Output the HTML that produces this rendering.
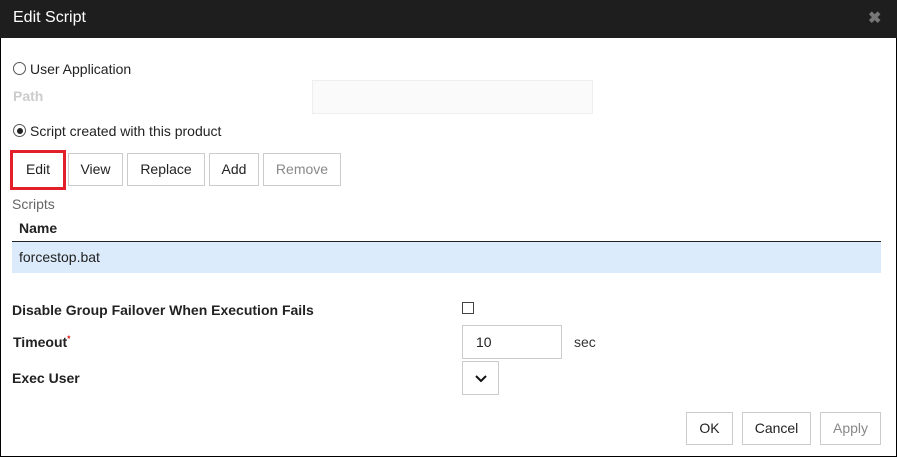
<!DOCTYPE html>
<html><head><style>
body{margin:0;width:897px;height:457px;overflow:hidden;background:#fff;font-family:"Liberation Sans",Arial,sans-serif;font-size:14px;color:#222}
.f{position:absolute;left:0;top:0;width:895px;height:455px;border:1px solid #000;}
.h{position:absolute;left:0;top:0;width:897px;height:38px;background:#1e1e1e;color:#fff;font-size:16px}
.a{position:absolute}
.b{position:absolute;border:1px solid #ccc;background:#fff;height:31px;line-height:31px;text-align:center;font-size:14px;color:#222;box-sizing:border-box;height:33px}
.bold{font-weight:bold}
.rad{position:absolute;width:11px;height:11px;border:1px solid #555;border-radius:50%;background:#fff}
</style></head><body>
<div class="f"></div>
<div class="h"><span class="a" style="left:13px;top:9px">Edit Script</span><span class="a" style="left:868px;top:8px;color:#777;font-size:16px;font-weight:bold">✖</span></div>
<div class="rad" style="left:13px;top:62px"></div>
<span class="a" style="left:30px;top:61px">User Application</span>
<span class="a bold" style="left:13px;top:88px;color:#ccc">Path</span>
<div class="a" style="left:312px;top:80px;width:279px;height:32px;border:1px solid #eee;background:#fafafa"></div>
<div class="rad" style="left:13px;top:124px"><div style="position:absolute;left:2.5px;top:2.5px;width:6px;height:6px;border-radius:50%;background:#222"></div></div>
<span class="a" style="left:30px;top:123px">Script created with this product</span>
<div class="a" style="left:10px;top:150px;width:50px;height:34px;border:3px solid #e3202a"></div>
<div class="b" style="left:15px;top:153px;width:46px;border-color:transparent">Edit</div>
<div class="b" style="left:68px;top:153px;width:55px">View</div>
<div class="b" style="left:127px;top:153px;width:78px">Replace</div>
<div class="b" style="left:209px;top:153px;width:50px">Add</div>
<div class="b" style="left:263px;top:153px;width:78px;color:#888">Remove</div>
<span class="a" style="left:12px;top:196px;color:#666">Scripts</span>
<span class="a bold" style="left:19px;top:220px">Name</span>
<div class="a" style="left:12px;top:241px;width:869px;height:1px;background:#222"></div>
<div class="a" style="left:12px;top:242px;width:869px;height:31px;background:#dcebfb"></div>
<span class="a" style="left:19px;top:249px">forcestop.bat</span>
<span class="a bold" style="left:12px;top:302px">Disable Group Failover When Execution Fails</span>
<div class="a" style="left:462px;top:302px;width:10px;height:10px;border:1px solid #444"></div>
<span class="a bold" style="left:13px;top:334px">Timeout<sup style="color:#d00;font-size:8px">*</sup></span>
<div class="a" style="left:462px;top:325px;width:98px;height:32px;border:1px solid #ccc;line-height:32px;box-sizing:border-box;padding-left:13px;height:34px;width:100px">10</div>
<span class="a" style="left:574px;top:334px;color:#333">sec</span>
<span class="a bold" style="left:12px;top:370px">Exec User</span>
<div class="a" style="left:462px;top:361px;width:37px;height:34px;border:1px solid #ccc;box-sizing:border-box"><svg width="37" height="34" style="position:absolute;left:-1px;top:-1px"><path d="M14 15l5 5 5-5" stroke="#111" stroke-width="2" fill="none"/></svg></div>
<div class="b" style="left:686px;top:412px;width:47px">OK</div>
<div class="b" style="left:742px;top:412px;width:69px">Cancel</div>
<div class="b" style="left:820px;top:412px;width:61px;color:#888">Apply</div>
</body></html>
